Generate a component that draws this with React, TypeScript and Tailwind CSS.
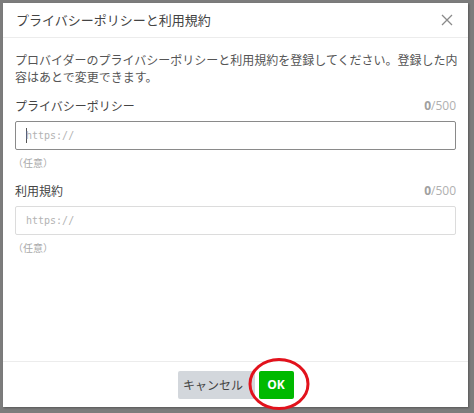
import React from "react";

const jp = { fontFamily: '"Noto Sans CJK JP", "Noto Sans", sans-serif' };

function Field({ label, focused }: { label: string; focused?: boolean }) {
  return (
    <div className="flex flex-col">
      <div className="flex items-center justify-between h-[17px]">
        <span className="text-[12px] leading-[17px] text-[#444]">{label}</span>
        <span className="text-[12px] leading-[17px] text-[#b0b0b0]" style={{ fontFamily: '"Open Sans", sans-serif' }}>
          <span className="font-bold text-[#a0a0a0]">0</span>/500
        </span>
      </div>
      <div
        className={`mt-[7px] h-[29px] rounded-[2px] border flex items-center pl-[10px] ${
          focused ? "border-[#8a8a8a]" : "border-[#dcdcdc]"
        }`}
      >
        {focused && <span className="w-px h-[15px] bg-[#555] -mr-px" />}
        <span
          className="text-[10px] text-[#b3b3b3]"
          style={{ fontFamily: '"DejaVu Sans Mono", "Liberation Mono", monospace' }}
        >
          https://
        </span>
      </div>
      <div className="mt-[5px] text-[10px] leading-[15px] text-[#aaa] -ml-[2px]">（任意）</div>
    </div>
  );
}

export default function App() {
  return (
    <div className="w-[474px] h-[413px] bg-[#7c7c7c] pl-[3px] pt-[3px]" style={jp}>
      <div className="relative w-[465px] h-[404px] bg-white flex flex-col shadow-[1px_1px_2px_rgba(0,0,0,0.3)]">
        <div className="h-[35px] flex items-center justify-between pl-[13px] pr-[14px] border-b border-[#ececec]">
          <span className="text-[13px] text-[#444]">プライバシーポリシーと利用規約</span>
          <svg width="12" height="12" viewBox="0 0 12 12" className="mr-[1px]">
            <path d="M1 1 L11 11 M11 1 L1 11" stroke="#8a8a8a" strokeWidth="1.3" />
          </svg>
        </div>
        <div className="flex-1 px-[12px] pt-[13px]">
          <p className="text-[12px] leading-[17px] text-[#555] mr-[-2px]">
            プロバイダーのプライバシーポリシーと利用規約を登録してください。登録した内容はあとで変更できます。
          </p>
          <div className="mt-[12px]">
            <Field label="プライバシーポリシー" focused />
          </div>
          <div className="mt-[12px]">
            <Field label="利用規約" />
          </div>
        </div>
        <div className="h-[46px] border-t border-[#ececec] flex items-center justify-center gap-[4px]">
          <div className="h-[28px] w-[77px] bg-[#d3d7dc] rounded-[2px] flex items-center justify-center text-[12px] text-[#444] pr-[6px]">
            キャンセル
          </div>
          <div
            className="h-[28px] w-[35px] bg-[#00b900] rounded-[2px] flex items-center justify-center text-[12px] font-bold text-white"
            style={{ fontFamily: '"Open Sans", sans-serif' }}
          >
            OK
          </div>
        </div>
        <svg
          className="absolute left-[244px] top-[353px] pointer-events-none"
          width="66"
          height="56"
          viewBox="0 0 66 56"
        >
          <ellipse cx="32" cy="28" rx="29" ry="24.5" fill="none" stroke="#e2121c" strokeWidth="3" />
        </svg>
      </div>
    </div>
  );
}
